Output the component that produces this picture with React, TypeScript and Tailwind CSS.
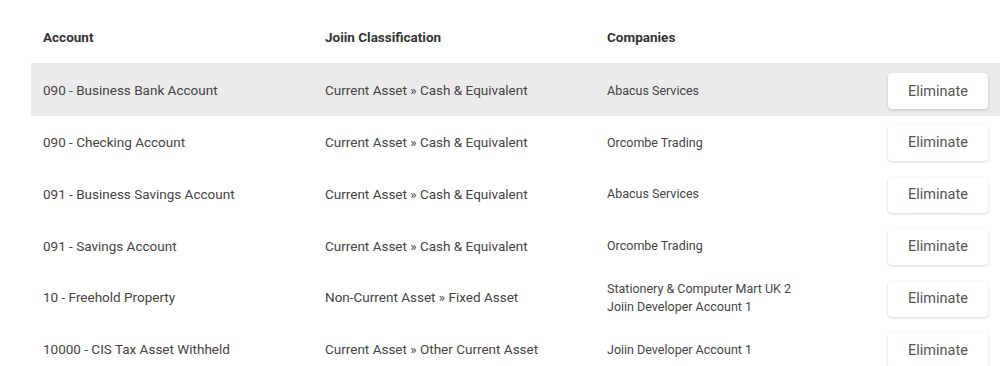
const rows = [
  { account: "090 - Business Bank Account", cls: "Current Asset » Cash & Equivalent", companies: ["Abacus Services"] },
  { account: "090 - Checking Account", cls: "Current Asset » Cash & Equivalent", companies: ["Orcombe Trading"] },
  { account: "091 - Business Savings Account", cls: "Current Asset » Cash & Equivalent", companies: ["Abacus Services"] },
  { account: "091 - Savings Account", cls: "Current Asset » Cash & Equivalent", companies: ["Orcombe Trading"] },
  {
    account: "10 - Freehold Property",
    cls: "Non-Current Asset » Fixed Asset",
    companies: ["Stationery & Computer Mart UK 2", "Joiin Developer Account 1"],
  },
  { account: "10000 - CIS Tax Asset Withheld", cls: "Current Asset » Other Current Asset", companies: ["Joiin Developer Account 1"] },
];

export default function App() {
  return (
    <div className="h-[366px] w-[1000px] overflow-hidden bg-white pl-[31px] pt-[10px] font-['Roboto',sans-serif]">
      {/* header */}
      <div className="grid h-[54px] grid-cols-[282px_282px_282px_1fr] items-center border-b border-[#e3e6ea] pt-[2px] text-[13.5px] font-bold text-[#333]">
        <div className="pl-3">Account</div>
        <div className="pl-3">Joiin Classification</div>
        <div className="pl-3">Companies</div>
        <div />
      </div>

      {rows.map((r, i) => (
        <div
          key={r.account}
          className={
            "grid h-[51.8px] grid-cols-[282px_282px_282px_1fr] items-center text-[13.5px] text-[#444] " +
            (i === 0 ? "bg-[#ebebeb]" : "bg-white")
          }
        >
          <div className="pl-3 pt-[1px]">{r.account}</div>
          <div className="pl-3 pt-[1px]">{r.cls}</div>
          <div className="flex flex-col pl-3 pt-[2px] text-[12.5px] leading-[18px]">
            {r.companies.map((c) => (
              <span key={c}>{c}</span>
            ))}
          </div>
          <div className="flex justify-end pr-3 pt-[3px]">
            <button className="h-[36px] w-[100px] rounded bg-white text-[14.5px] text-[#555] shadow-[0_1px_3px_rgba(0,0,0,0.18)]">
              Eliminate
            </button>
          </div>
        </div>
      ))}
    </div>
  );
}
